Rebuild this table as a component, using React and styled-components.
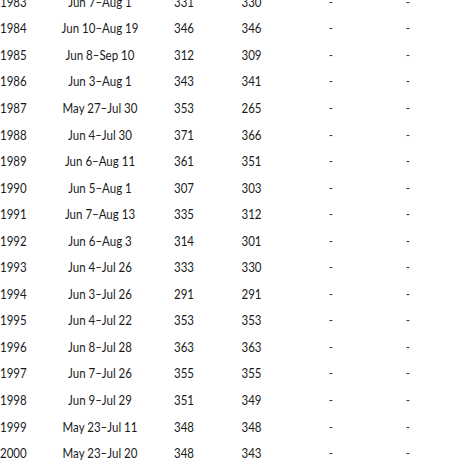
import styled, { createGlobalStyle } from 'styled-components'

const Global = createGlobalStyle`
  html, body {
    margin: 0;
    padding: 0;
    background: #fff;
    overflow: hidden;
  }
`

const rows = [
  ['1983', 'Jun 7–Aug 1', '331', '330'],
  ['1984', 'Jun 10–Aug 19', '346', '346'],
  ['1985', 'Jun 8–Sep 10', '312', '309'],
  ['1986', 'Jun 3–Aug 1', '343', '341'],
  ['1987', 'May 27–Jul 30', '353', '265'],
  ['1988', 'Jun 4–Jul 30', '371', '366'],
  ['1989', 'Jun 6–Aug 11', '361', '351'],
  ['1990', 'Jun 5–Aug 1', '307', '303'],
  ['1991', 'Jun 7–Aug 13', '335', '312'],
  ['1992', 'Jun 6–Aug 3', '314', '301'],
  ['1993', 'Jun 4–Jul 26', '333', '330'],
  ['1994', 'Jun 3–Jul 26', '291', '291'],
  ['1995', 'Jun 4–Jul 22', '353', '353'],
  ['1996', 'Jun 8–Jul 28', '363', '363'],
  ['1997', 'Jun 7–Jul 26', '355', '355'],
  ['1998', 'Jun 9–Jul 29', '351', '349'],
  ['1999', 'May 23–Jul 11', '348', '348'],
  ['2000', 'May 23–Jul 20', '348', '343'],
]

const Table = styled.div`
  margin-top: -12px;
  width: 474px;
  font-family: Lato, 'Liberation Sans', sans-serif;
  font-size: 11.5px;
  color: #1a1a1a;
`

const Row = styled.div`
  display: grid;
  grid-template-columns: 50px 100px 68px 67px 92px 62px;
  height: 26.56px;
  align-items: center;
`

const Cell = styled.div`
  text-align: ${(p) => (p.$left ? 'left' : 'center')};
  white-space: nowrap;
  transform: scaleY(1.13);
  color: ${(p) => (p.$muted ? '#3a3a3a' : 'inherit')};
`

export default function App() {
  return (
    <>
      <Global />
      <Table>
        {rows.map(([year, span, a, b]) => (
          <Row key={year}>
            <Cell $left>{year}</Cell>
            <Cell>{span}</Cell>
            <Cell>{a}</Cell>
            <Cell>{b}</Cell>
            <Cell $muted>-</Cell>
            <Cell $muted>-</Cell>
          </Row>
        ))}
      </Table>
    </>
  )
}
